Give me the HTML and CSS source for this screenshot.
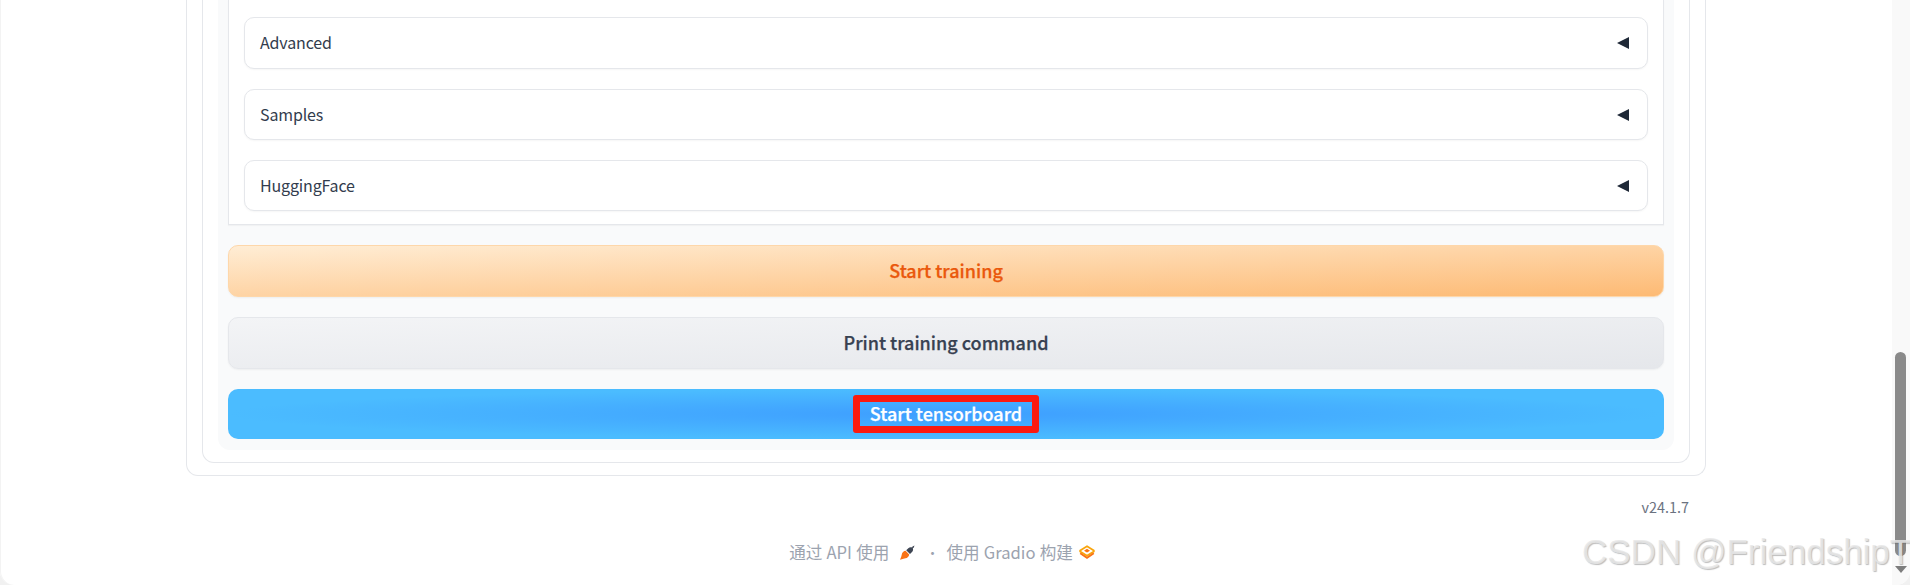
FILE: index.html
```html
<!DOCTYPE html>
<html lang="zh">
<head>
<meta charset="utf-8">
<title>Gradio</title>
<link rel="stylesheet" href="styles.css">
</head>
<body>
<div class="window">
  <main class="page">
    <section class="outer-card">
      <div class="inner-card">
        <div class="panel">
          <div class="accordions">
            <div class="accordion"><span>Advanced</span><i class="caret"></i></div>
            <div class="accordion"><span>Samples</span><i class="caret"></i></div>
            <div class="accordion"><span>HuggingFace</span><i class="caret"></i></div>
          </div>
          <button class="btn btn-orange">Start training</button>
          <button class="btn btn-grey">Print training command</button>
          <button class="btn btn-blue"><span class="highlight">Start tensorboard</span></button>
        </div>
      </div>
    </section>
    <div class="version">v24.1.7</div>
    <footer class="footer">
      <span>通过 API 使用</span>
      <svg class="rocket" viewBox="0 0 15 15" width="15" height="15"><path fill="#3f4654" d="M14.500.5l-.8 2.300-.9.400c.6 1.500.2 2.800-.8 3.800L10 9 6.200 5.200 8.300 3.300c1-.9 2.400-1.300 3.800-.7l.4-1.100z"/><path fill="#f97316" d="M5.600 5.800C3.700 6 2 7.400 1.800 9.400L1.300 11.500 0 14.800l3.500-1.100 2-.4c2-.3 3.400-1.900 3.700-3.900z"/></svg>
      <span class="dot">·</span>
      <span>使用 Gradio 构建</span>
      <svg class="logo" viewBox="0 0 16 14" width="16" height="14"><path fill="none" stroke="#f9a50c" stroke-width="1.800" d="M8 1.200l6.800 4.200v1.200L8 10.800 1.200 6.600V5.400z"/><path fill="none" stroke="#f97316" stroke-width="1.800" d="M1.200 8.300L8 12.800l6.800-4.500"/><path fill="#f97316" d="M8 3.800l3 1.900-3 1.900-3-1.900z"/></svg>
    </footer>
  </main>
  <div class="scrollbar">
    <div class="thumb"></div>
    <div class="arrow"></div>
  </div>
  <div class="watermark">CSDN @FriendshipT</div>
</div>
</body>
</html>
```
FILE: styles.css
```css
* { box-sizing: border-box; }
html, body { margin: 0; padding: 0; height: 100%; overflow: hidden; background: #f1f1f1; }
body { font-family: "Noto Sans CJK SC", "Noto Sans", sans-serif; }
.window { position: relative; display: flex; width: 1910px; height: 585px; overflow: hidden; background: #fff; border-radius: 0 0 14px 14px; box-shadow: inset 1px 0 0 #f3f3f3; }
.page { flex: 1; min-width: 0; padding: 0 186px; }
.outer-card { height: 476px; padding: 0 15px 12px; border: 1px solid #e5e7eb; border-top: 0; border-radius: 0 0 12px 12px; }
.inner-card { height: 463px; padding: 0 15px 12px; border: 1px solid #e5e7eb; border-top: 0; border-radius: 0 0 12px 12px; }
.panel { display: flex; flex-direction: column; gap: 20px; height: 450px; padding: 0 10px 10px; background: #f9fafb; border-radius: 0 0 12px 12px; }
.accordions { display: flex; flex-direction: column; gap: 20px; height: 225px; padding: 17.3px 15px 0; background: #fff; border: 1px solid #e5e7eb; border-top: 0; box-shadow: 0 1px 1px rgba(0,0,0,.03); }
.accordion { display: flex; align-items: center; justify-content: space-between; flex: none; height: 51.4px; padding: 0 15px 1px; background: #fff; border: 1px solid #e5e7eb; border-radius: 10px; box-shadow: 0 1px 2px rgba(0,0,0,.04); font-size: 16px; letter-spacing: -.15px; color: #323c4d; }
.caret { width: 0; height: 0; margin: 2px 3px 0 0; border-top: 6px solid transparent; border-bottom: 6px solid transparent; border-right: 12px solid #1f2937; }
.btn { display: flex; align-items: center; justify-content: center; width: 100%; height: 52px; flex: none; border: 1px solid transparent; border-radius: 10px; font-family: inherit; font-size: 18px; font-weight: 500; -webkit-text-stroke: .25px currentColor; padding: 0 0 2px; }
.btn-orange { color: #ea580c; border-color: #fed7aa; background: linear-gradient(to bottom right, #ffedd5 0%, #fdba74 100%); box-shadow: 0 1px 2px rgba(0,0,0,.05); }
.btn-grey { color: #374151; border-color: #e5e7eb; background: linear-gradient(to bottom right, #f3f4f6 0%, #e5e7eb 100%); box-shadow: 0 1px 2px rgba(0,0,0,.05); }
.btn-blue { color: #fff; height: 50px; border: 0; padding: 0; background: radial-gradient(ellipse 50% 50% at 50% 50%, #3e9eff 0%, #4bbcff 100%); }
.highlight { display: inline-block; padding: 0 9.5px 1px; line-height: 23px; border: 7px solid #fb1a10; border-radius: 3px; }
.version { text-align: right; padding: 22px 17px 0 0; font-size: 14.4px; line-height: 18px; color: #6b7280; }
.footer { display: flex; align-items: center; justify-content: center; margin-top: 24px; padding-right: 8px; font-size: 16.6px; word-spacing: .5px; line-height: 24px; color: #9ca3af; }
.rocket { margin-left: 11px; }
.dot { width: 16px; margin: 0 6px 0 9px; text-align: center; font-size: 14px; }
.logo { margin-left: 6px; }
.scrollbar { position: relative; flex: none; width: 18px; background: #f9f9f9; }
.thumb { position: absolute; left: 3px; top: 352px; width: 11px; height: 204px; border-radius: 6px; background: #8a8a8a; }
.arrow { position: absolute; left: 3px; top: 566px; width: 0; height: 0; border-left: 6px solid transparent; border-right: 6px solid transparent; border-top: 7px solid #7d7d7d; }
.watermark { position: absolute; left: 1582px; top: 527px; font-family: "Liberation Sans", sans-serif; font-size: 35px; line-height: 50px; white-space: nowrap; color: rgba(232,232,232,.85); text-shadow: 1px 1px 1px rgba(90,90,90,.4); }
```
